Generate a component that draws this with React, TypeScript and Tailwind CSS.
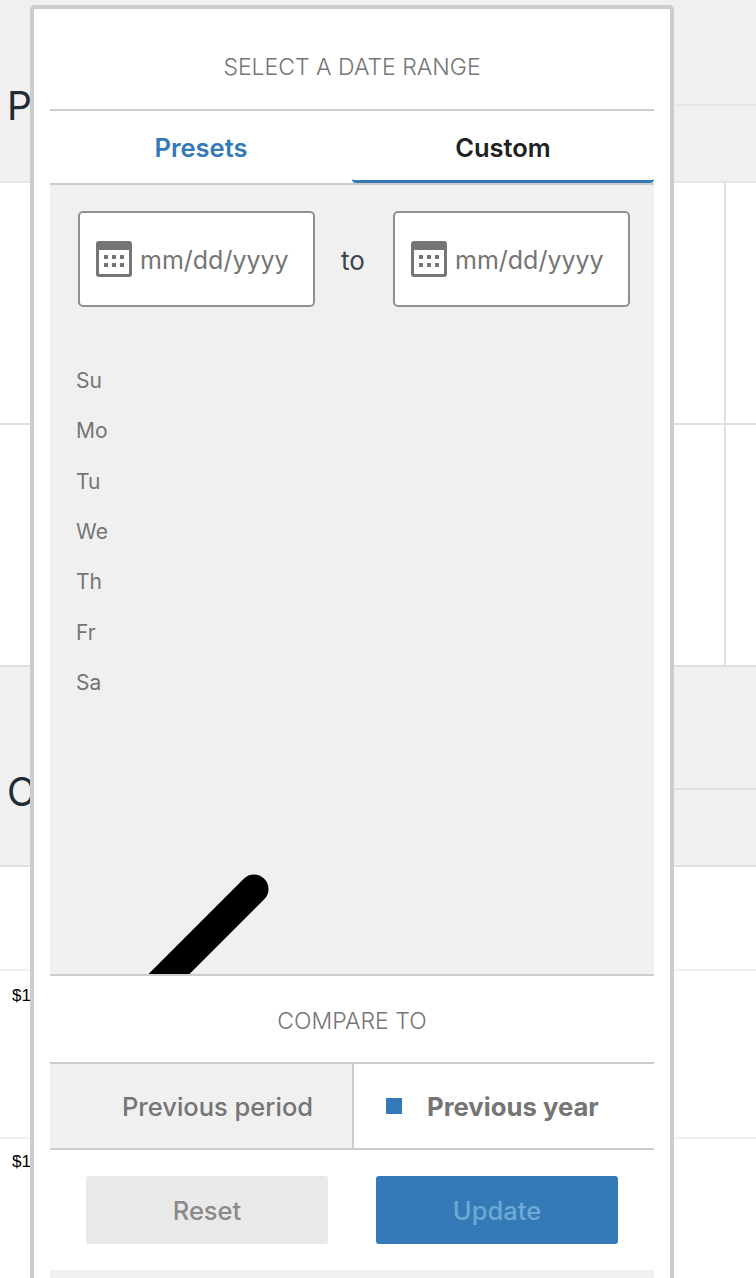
const weekDays = ["Su", "Mo", "Tu", "We", "Th", "Fr", "Sa"];

function CalendarIcon() {
  return (
    <svg width="36" height="36" viewBox="0 0 36 36" className="shrink-0">
      <path
        fill="#757575"
        fillRule="evenodd"
        d="M3 0h30a3 3 0 0 1 3 3v30a3 3 0 0 1-3 3H3a3 3 0 0 1-3-3V3a3 3 0 0 1 3-3zM3 9v23a1 1 0 0 0 1 1h28a1 1 0 0 0 1-1V9z"
      />
      <path
        fill="#757575"
        d="M8 14h4v4H8zM16 14h4v4h-4zM24 14h4v4h-4zM8 22h4v4H8zM16 22h4v4h-4zM24 22h4v4h-4z"
      />
    </svg>
  );
}

function DateInput() {
  return (
    <div className="flex h-[96px] w-[237px] items-center rounded-[5px] border-2 border-[#8c9196] bg-white pl-[16px]">
      <CalendarIcon />
      <span className="ml-[8px] pt-[3px] text-[25px] leading-none text-[#757575]">mm/dd/yyyy</span>
    </div>
  );
}

export default function App() {
  return (
    <div className="relative h-[1278px] w-[756px] overflow-hidden bg-white [font-family:Inter,sans-serif]">
      {/* page behind the popover */}
      <div className="flex h-[183px] border-b-2 border-[#e6e6e6] bg-[#f0f0f0]">
        <div className="w-[34px] shrink-0 pl-[7px] pt-[86px] text-[39px] leading-[40px] text-[#212b36]">P</div>
        <div className="h-[106px] flex-1 border-b-2 border-[#e6e6e6]" />
      </div>
      <div className="h-[242px] border-b-2 border-[#e0e0e0] pl-[724px]">
        <div className="h-full border-l-2 border-[#e0e0e0]" />
      </div>
      <div className="h-[240px] pl-[724px]">
        <div className="h-full border-l-2 border-[#e0e0e0]" />
      </div>
      <div className="flex h-[202px] border-t-2 border-b-2 border-[#e0e0e0] bg-[#f0f0f0]">
        <div className="w-[34px] shrink-0 pl-[7px] pt-[105px] text-[39px] leading-[40px] text-[#212b36]">C</div>
        <div className="h-[123px] flex-1 border-b-2 border-[#e0e0e0]" />
      </div>
      <div className="h-[104px] border-b-2 border-[#f0f0f0]" />
      <div className="h-[168px] border-b-2 border-[#f0f0f0] pl-[12px] pt-[15px] text-[17px] leading-5 text-black [font-family:'Liberation_Sans',sans-serif]">
        $1
      </div>
      <div className="pl-[12px] pt-[13px] text-[17px] leading-5 text-black [font-family:'Liberation_Sans',sans-serif]">
        $1
      </div>

      {/* date range popover */}
      <div className="absolute left-[30px] top-[5px] h-[1290px] w-[644px] rounded-[5px] border-[4px] border-[#cccccc] bg-white px-[16px]">
        <div className="flex h-[102px] items-center justify-center border-b-2 border-[#cccccc] pt-[17px] text-[23px] font-light text-[#757575]">
          SELECT A DATE RANGE
        </div>
        <div className="flex h-[72px]">
          <div className="flex w-1/2 items-center justify-center pt-[3px] text-[25.5px] font-semibold text-[#337ab7]">Presets</div>
          <div className="flex w-1/2 items-center justify-center rounded-b-[4px] border-b-[3px] border-[#337ab7] pt-[5px] text-[25.5px] font-semibold text-[#212121]">
            Custom
          </div>
        </div>
        <div className="h-[793px] overflow-hidden border-t-2 border-b-2 border-[#cccccc] bg-[#f0f0f0]">
          <div className="flex items-center pl-[28px] pt-[26px]">
            <DateInput />
            <span className="w-[78px] pr-[2px] pt-[3px] text-center text-[26px] text-[#3b4351]">to</span>
            <DateInput />
          </div>
          <div className="mt-[49px] flex flex-col pl-[26px] text-[21px] leading-[50.33px] text-[#757575]">
            {weekDays.map((d) => (
              <span key={d}>{d}</span>
            ))}
          </div>
          <svg width="300" height="170" viewBox="0 0 300 170" className="mt-[103px]">
            <line x1="204" y1="78" x2="104" y2="178" stroke="#000" strokeWidth="29" strokeLinecap="round" />
          </svg>
        </div>
        <div className="flex h-[86px] items-center justify-center pt-[4px] text-[23px] font-light text-[#757575]">
          COMPARE TO
        </div>
        <div className="flex h-[88px] border-t-2 border-b-2 border-[#cccccc]">
          <div className="flex w-[304px] items-center border-r-2 border-[#cccccc] bg-[#f0f0f0] pl-[72px] pt-[2px] text-[25.5px] font-medium text-[#757575]">
            Previous period
          </div>
          <div className="flex flex-1 items-center pl-[32px] text-[25.7px] font-bold text-[#757575]">
            <span className="mr-[25px] h-[16px] w-[16px] bg-[#337ab7]" />
            <span className="pt-[2px]">Previous year</span>
          </div>
        </div>
        <div className="flex gap-[48px] px-[36px] pt-[26px]">
          <div className="flex h-[68px] w-[242px] items-center justify-center rounded-[3px] bg-[#e9e9e9] pt-[2px] text-[25.5px] font-medium text-[#8a8a8a]">
            Reset
          </div>
          <div className="flex h-[68px] w-[242px] items-center justify-center rounded-[3px] bg-[#337ab7] pt-[2px] text-[25.5px] font-medium text-[#6ea9d3]">
            Update
          </div>
        </div>
        <div className="mt-[26px] h-[20px] bg-[#f0f0f0]" />
      </div>
    </div>
  );
}
